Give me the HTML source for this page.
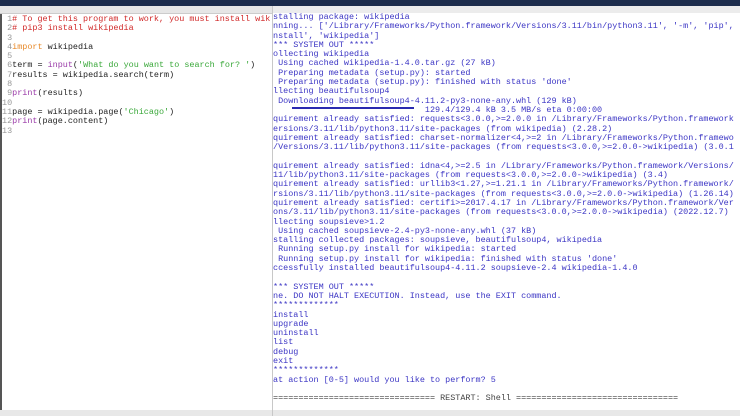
<!DOCTYPE html>
<html><head><style>
body{margin:0;width:740px;height:416px;overflow:hidden;background:#fff;position:relative;font-family:"Liberation Mono",monospace;}
#top{position:absolute;left:0;top:0;width:740px;height:6px;background:#1c2c4c;}
#tb1{position:absolute;left:0;top:6px;width:272px;height:7px;background:#e6e6e6;border-bottom:1px solid #ccc;}
#tb2{position:absolute;left:273px;top:6px;width:467px;height:7px;background:#ececec;}
#left{position:absolute;left:0;top:14px;width:272px;height:397px;background:#fff;border-left:2px solid #555;box-sizing:border-box;}
#div{position:absolute;left:272px;top:6px;width:1px;height:410px;background:#c8c8c8;}
pre{margin:0;font-family:"Liberation Mono",monospace;font-size:8.45px;line-height:9.3px;white-space:pre;}
#code{position:absolute;left:2px;top:15px;color:#222;}
.n{color:#999;}
.c{color:#d02828;}
.k{color:#e88a2a;}
.b{color:#9a3aa8;}
.s{color:#3aa83a;}
#out{position:absolute;left:273px;top:13px;color:#3b35c4;}
#sb1{position:absolute;left:0;top:410px;width:272px;height:6px;background:#e8e8e8;}
#sb2{position:absolute;left:273px;top:410px;width:467px;height:6px;background:#e8e8e8;}
#bar{position:absolute;left:292px;top:107px;width:122px;height:2px;background:#2a2ab0;}
.g{color:#444;}
</style></head><body>
<div id="top"></div>
<div id="tb1"></div><div id="tb2"></div>
<div id="left"></div>
<div id="div"></div>
<pre id="code"><span class="n"> 1</span><span class="c"># To get this program to work, you must install wik</span>
<span class="n"> 2</span><span class="c"># pip3 install wikipedia</span>
<span class="n"> 3</span>
<span class="n"> 4</span><span class="k">import</span> wikipedia
<span class="n"> 5</span>
<span class="n"> 6</span>term = <span class="b">input</span>(<span class="s">'What do you want to search for? '</span>)
<span class="n"> 7</span>results = wikipedia.search(term)
<span class="n"> 8</span>
<span class="n"> 9</span><span class="b">print</span>(results)
<span class="n">10</span>
<span class="n">11</span>page = wikipedia.page(<span class="s">'Chicago'</span>)
<span class="n">12</span><span class="b">print</span>(page.content)
<span class="n">13</span></pre>
<pre id="out">stalling package: wikipedia
nning... ['/Library/Frameworks/Python.framework/Versions/3.11/bin/python3.11', '-m', 'pip',
nstall', 'wikipedia']
*** SYSTEM OUT *****
ollecting wikipedia
 Using cached wikipedia-1.4.0.tar.gz (27 kB)
 Preparing metadata (setup.py): started
 Preparing metadata (setup.py): finished with status 'done'
llecting beautifulsoup4
 Downloading beautifulsoup4-4.11.2-py3-none-any.whl (129 kB)
                              129.4/129.4 kB 3.5 MB/s eta 0:00:00
quirement already satisfied: requests&lt;3.0.0,&gt;=2.0.0 in /Library/Frameworks/Python.framework
ersions/3.11/lib/python3.11/site-packages (from wikipedia) (2.28.2)
quirement already satisfied: charset-normalizer&lt;4,&gt;=2 in /Library/Frameworks/Python.framewo
/Versions/3.11/lib/python3.11/site-packages (from requests&lt;3.0.0,&gt;=2.0.0-&gt;wikipedia) (3.0.1

quirement already satisfied: idna&lt;4,&gt;=2.5 in /Library/Frameworks/Python.framework/Versions/
11/lib/python3.11/site-packages (from requests&lt;3.0.0,&gt;=2.0.0-&gt;wikipedia) (3.4)
quirement already satisfied: urllib3&lt;1.27,&gt;=1.21.1 in /Library/Frameworks/Python.framework/
rsions/3.11/lib/python3.11/site-packages (from requests&lt;3.0.0,&gt;=2.0.0-&gt;wikipedia) (1.26.14)
quirement already satisfied: certifi&gt;=2017.4.17 in /Library/Frameworks/Python.framework/Ver
ons/3.11/lib/python3.11/site-packages (from requests&lt;3.0.0,&gt;=2.0.0-&gt;wikipedia) (2022.12.7)
llecting soupsieve&gt;1.2
 Using cached soupsieve-2.4-py3-none-any.whl (37 kB)
stalling collected packages: soupsieve, beautifulsoup4, wikipedia
 Running setup.py install for wikipedia: started
 Running setup.py install for wikipedia: finished with status 'done'
ccessfully installed beautifulsoup4-4.11.2 soupsieve-2.4 wikipedia-1.4.0

*** SYSTEM OUT *****
ne. DO NOT HALT EXECUTION. Instead, use the EXIT command.
*************
install
upgrade
uninstall
list
debug
exit
*************
at action [0-5] would you like to perform? 5

<span class="g">================================ RESTART: Shell ================================</span></pre>
<div id="bar"></div>
<div id="sb1"></div><div id="sb2"></div>
</body></html>
